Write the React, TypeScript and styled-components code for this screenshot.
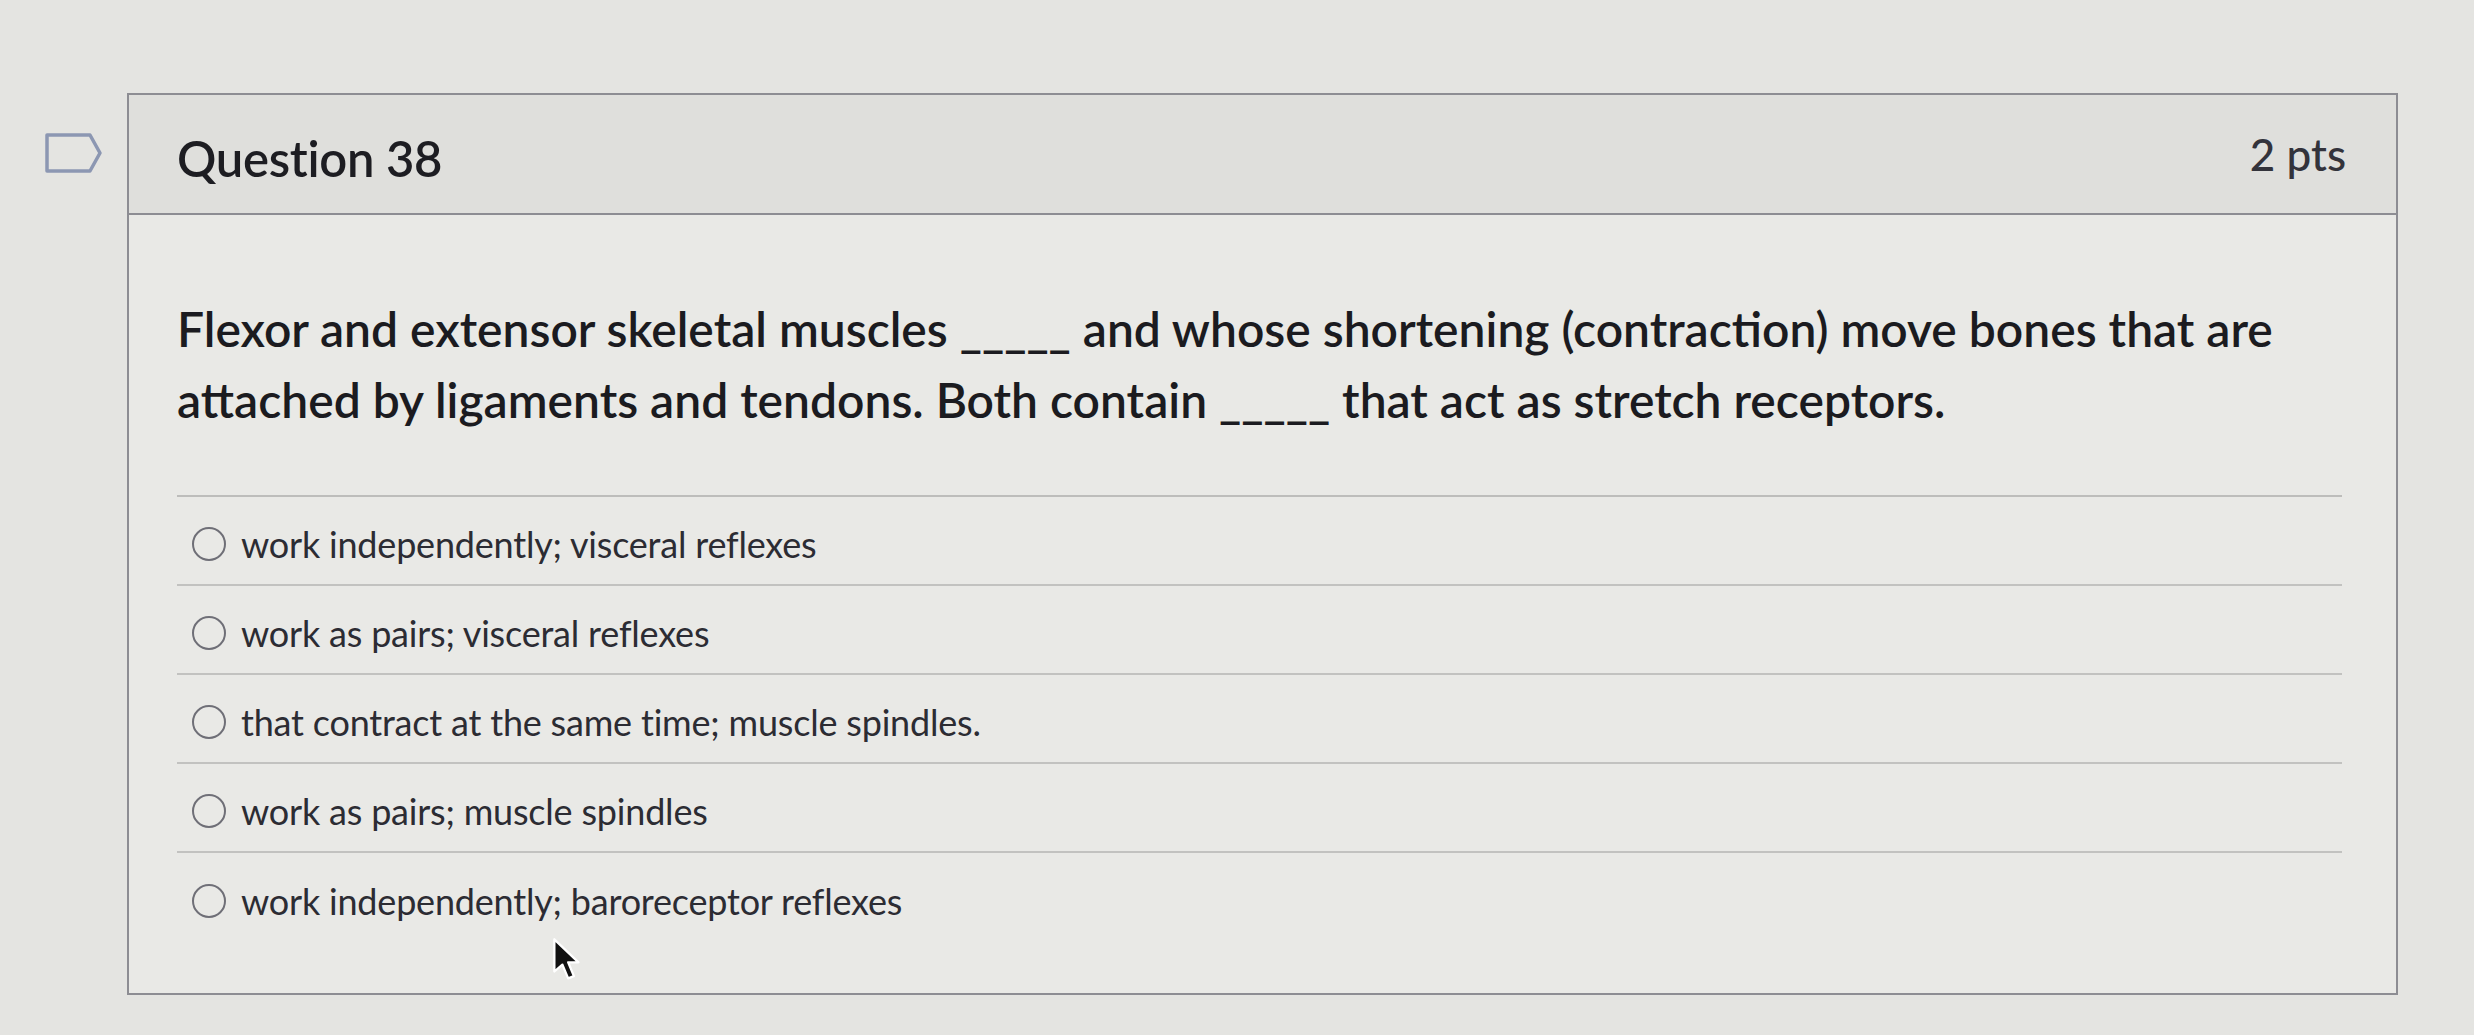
import React from "react";
import styled, { createGlobalStyle } from "styled-components";

const Global = createGlobalStyle`
  html, body { margin: 0; padding: 0; }
  body {
    background: #e4e4e1;
    font-family: Lato, "Open Sans", "Liberation Sans", sans-serif;
    width: 2474px;
    height: 1035px;
    overflow: hidden;
  }
`;

const Page = styled.div`
  position: relative;
  width: 2474px;
  height: 1035px;
  box-sizing: border-box;
  padding: 93px 76px 0 44px;
  display: flex;
  align-items: flex-start;
`;

const FlagCol = styled.div`
  width: 83px;
  height: 120px;
  display: flex;
  align-items: center;
  flex-shrink: 0;
`;

const Card = styled.div`
  flex: 1;
  height: 902px;
  border: 2px solid #8d8d93;
  box-sizing: border-box;
  display: flex;
  flex-direction: column;
  background: #e9e9e6;
`;

const Header = styled.div`
  height: 120px;
  box-sizing: border-box;
  background: #dfdfdc;
  border-bottom: 2px solid #8d8d93;
  display: flex;
  align-items: center;
  justify-content: space-between;
  padding: 0 50px 0 48px;
`;

const Title = styled.h2`
  margin: 0;
  font-size: 49px;
  font-weight: 600;
  color: #1d1d22;
  letter-spacing: -0.3px;
  transform: translateY(4px);
`;

const Points = styled.div`
  font-size: 44px;
  font-weight: 500;
  color: #33333b;
`;

const Body = styled.div`
  flex: 1;
  padding: 0 54px 0 48px;
  display: flex;
  flex-direction: column;
`;

const QuestionText = styled.p`
  margin: 0;
  padding: 78px 0 60px;
  font-size: 48px;
  line-height: 71px;
  font-weight: 600;
  color: #1b1b20;
  letter-spacing: 0;
  border-bottom: 2px solid #bdbdbb;
`;

const Answers = styled.div`
  display: flex;
  flex-direction: column;
`;

const AnswerRow = styled.label<{ $last?: boolean }>`
  height: 89px;
  box-sizing: border-box;
  display: flex;
  align-items: center;
  gap: 15px;
  padding: 6px 0 0 15px;
  border-bottom: ${(p) => (p.$last ? "none" : "2px solid #c2c2c0")};
  font-size: 36px;
  color: #2c2c33;
  letter-spacing: -0.2px;
`;

const Radio = styled.span`
  width: 34px;
  height: 34px;
  border-radius: 50%;
  border: 2.5px solid #6f6f77;
  box-sizing: border-box;
  flex-shrink: 0;
`;

const Cursor = styled.svg`
  position: absolute;
  left: 552px;
  top: 937px;
`;

const answers = [
  "work independently; visceral reflexes",
  "work as pairs; visceral reflexes",
  "that contract at the same time; muscle spindles.",
  "work as pairs; muscle spindles",
  "work independently; baroreceptor reflexes",
];

export default function App() {
  return (
    <>
      <Global />
      <Page>
        <FlagCol>
          <svg width="60" height="42" viewBox="0 0 60 42">
            <path
              d="M3 3 H46 L56 21 L46 39 H3 Z"
              fill="none"
              stroke="#8c97b2"
              strokeWidth="3.5"
              strokeLinejoin="round"
            />
          </svg>
        </FlagCol>
        <Card>
          <Header>
            <Title>Question 38</Title>
            <Points>2 pts</Points>
          </Header>
          <Body>
            <QuestionText>
              Flexor and extensor skeletal muscles _____ and whose shortening
              (contraction) move bones that are attached by ligaments and
              tendons. Both contain _____ that act as stretch receptors.
            </QuestionText>
            <Answers>
              {answers.map((a, i) => (
                <AnswerRow key={a} $last={i === answers.length - 1}>
                  <Radio />
                  <span>{a}</span>
                </AnswerRow>
              ))}
            </Answers>
          </Body>
        </Card>
        <Cursor width="30" height="46" viewBox="0 0 26 40">
          <path
            d="M2 2 L2 30 L9 24 L14 36 L19 34 L14 22 L23 22 Z"
            fill="#111"
            stroke="#fff"
            strokeWidth="2"
            strokeLinejoin="round"
          />
        </Cursor>
      </Page>
    </>
  );
}
